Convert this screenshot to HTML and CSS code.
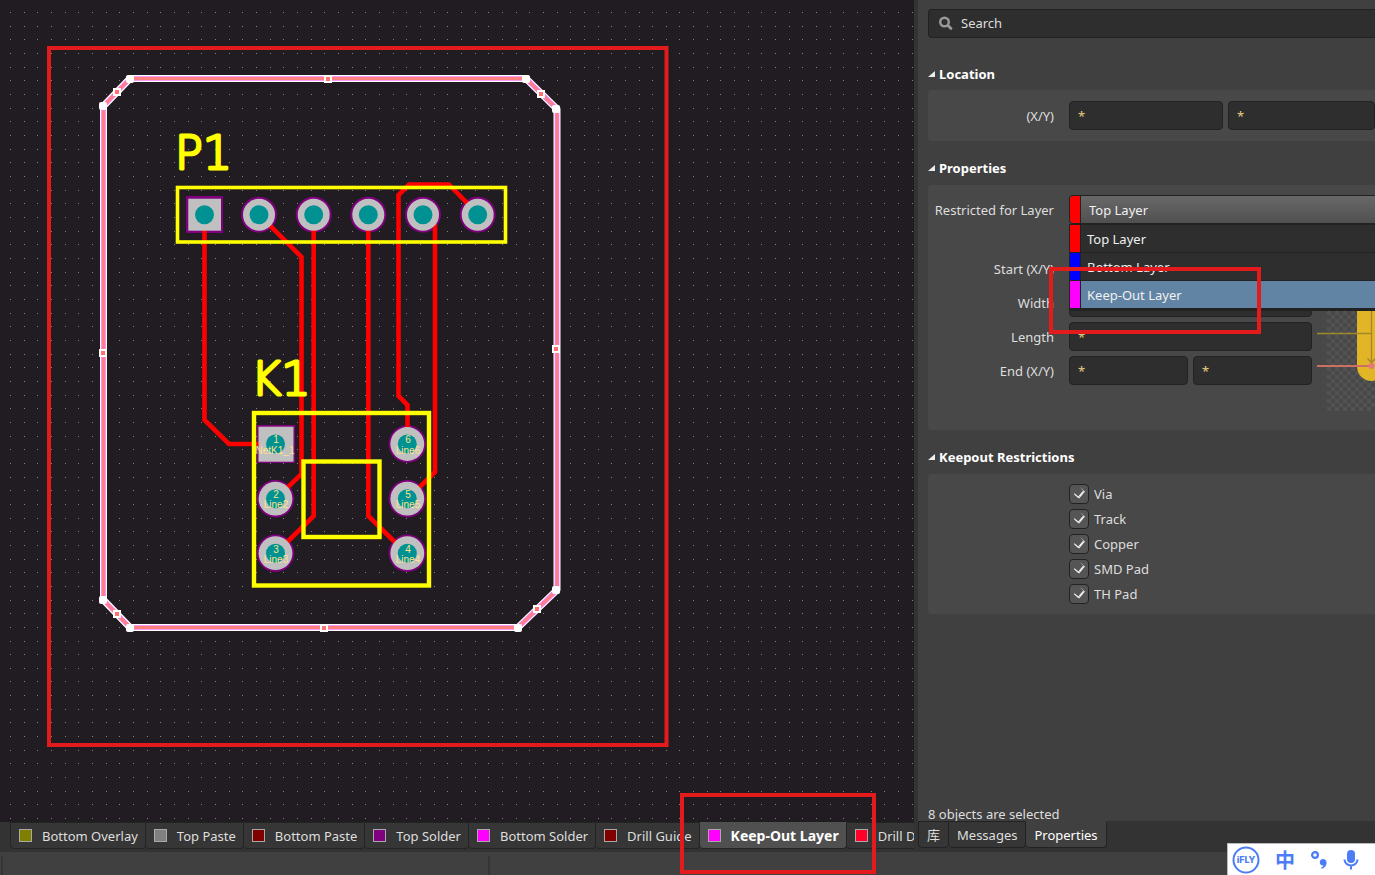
FILE: index.html
```html
<!DOCTYPE html>
<html lang="en">
<head>
<meta charset="utf-8">
<title>PCB Editor</title>
<link rel="stylesheet" href="styles.css">
</head>
<body>
<div class="app">
  <div class="main">
    <section class="workspace">
      <svg class="board" role="img" aria-label="PCB layout">
        <path id="grid" class="grid-dots"/>
        <g class="mask">
          <rect x="186" y="196" width="37" height="37"/>
          <circle cx="259" cy="214.7" r="18"/><circle cx="313.7" cy="214.7" r="18"/><circle cx="368.3" cy="214.7" r="18"/><circle cx="423" cy="214.7" r="18"/><circle cx="477.7" cy="214.7" r="18"/>
          <rect x="257" y="425" width="38" height="38"/>
          <circle cx="275.5" cy="498.7" r="18.7"/><circle cx="275.5" cy="553.2" r="18.7"/>
          <circle cx="407.3" cy="444" r="18.7"/><circle cx="407.3" cy="498.7" r="18.7"/><circle cx="407.3" cy="553.2" r="18.7"/>
        </g>
        <g class="tracks">
          <path d="M204.5 215V420L229 444H270"/>
          <path d="M259 214.700L301.500 257V474L276 498.700"/>
          <path d="M313.700 215V516L276 553"/>
          <path d="M368.300 215V516L407 554"/>
          <path d="M423 214L435 226V472L408 498.700"/>
          <path d="M477.700 214L449 184.500H409L398.500 195V396L407.500 405V440"/>
        </g>
        <g class="copper">
          <rect x="188.300" y="198.700" width="32.700" height="32"/>
          <circle cx="259" cy="214.7" r="16"/><circle cx="313.7" cy="214.7" r="16"/><circle cx="368.3" cy="214.7" r="16"/><circle cx="423" cy="214.7" r="16"/><circle cx="477.7" cy="214.7" r="16"/>
          <rect x="258.500" y="426.700" width="35" height="35"/>
          <circle cx="275.5" cy="498.7" r="16.900"/><circle cx="275.5" cy="553.2" r="16.900"/>
          <circle cx="407.3" cy="444" r="16.900"/><circle cx="407.3" cy="498.7" r="16.900"/><circle cx="407.3" cy="553.2" r="16.900"/>
        </g>
        <g class="holes">
          <circle cx="204.5" cy="214.7" r="9.500"/><circle cx="259" cy="214.7" r="9.500"/><circle cx="313.7" cy="214.7" r="9.500"/><circle cx="368.3" cy="214.7" r="9.500"/><circle cx="423" cy="214.7" r="9.500"/><circle cx="477.7" cy="214.7" r="9.500"/>
          <circle cx="275.5" cy="444" r="9.500"/><circle cx="275.5" cy="498.7" r="9.500"/><circle cx="275.5" cy="553.2" r="9.500"/>
          <circle cx="407.3" cy="444" r="9.500"/><circle cx="407.3" cy="498.7" r="9.500"/><circle cx="407.3" cy="553.2" r="9.500"/>
        </g>
        <g class="silk">
          <rect x="177.500" y="187.500" width="328" height="54.500"/>
          <rect class="silk-wide" x="254" y="413" width="175" height="172.500"/>
          <rect class="silk-wide" x="303.500" y="461.500" width="76" height="75.500"/>
        </g>
        <text class="designator" x="175" y="169">P1</text>
        <text class="designator" x="251" y="395">K1</text>
        <g class="pad-text">
          <text x="276" y="443">1</text><text x="275" y="454">NetK1_1</text>
          <text x="276" y="498">2</text><text x="276" y="508">Line2</text>
          <text x="276" y="553">3</text><text x="276" y="563">Line3</text>
          <text x="408" y="443">6</text><text x="408" y="454">Line6</text>
          <text x="408" y="498">5</text><text x="408" y="508">Line5</text>
          <text x="408" y="553">4</text><text x="408" y="563">Line4</text>
        </g>
        <g class="outline">
          <path class="outline-edge" d="M130 78.500H526L557 109V590L518 627.500H130L103.500 600V106Z"/>
          <path class="outline-glow" d="M130 78.500H526L557 109V590L518 627.500H130L103.500 600V106Z"/>
          <path class="outline-core" d="M130 78.500H526L557 109V590L518 627.500H130L103.500 600V106Z"/>
        </g>
        <g class="handles">
          <rect x="126" y="75" width="8" height="8" rx="2"/><rect x="99" y="102" width="8" height="8" rx="2"/>
          <rect x="522" y="75" width="8" height="8" rx="2"/><rect x="552" y="105" width="8" height="8" rx="2"/>
          <rect x="552" y="586" width="8" height="8" rx="2"/><rect x="514" y="624" width="8" height="8" rx="2"/>
          <rect x="126" y="624" width="8" height="8" rx="2"/><rect x="99" y="596" width="8" height="8" rx="2"/>
        </g>
        <g class="midpoints">
          <rect x="325" y="76" width="6" height="6"/><rect x="114" y="89" width="6" height="6"/>
          <rect x="538" y="91" width="6" height="6"/><rect x="553" y="346" width="6" height="6"/>
          <rect x="534" y="606" width="6" height="6"/><rect x="321" y="625" width="6" height="6"/>
          <rect x="114" y="611" width="6" height="6"/><rect x="100" y="350" width="6" height="6"/>
        </g>
        <rect class="callout" x="49" y="48" width="617.500" height="697"/>
      </svg>
      <nav class="layer-tabs" aria-label="Layers">
        <button class="layer-tab"><i class="chip olive"></i>Bottom Overlay</button>
        <button class="layer-tab"><i class="chip gray"></i>Top Paste</button>
        <button class="layer-tab"><i class="chip maroon"></i>Bottom Paste</button>
        <button class="layer-tab"><i class="chip purple"></i>Top Solder</button>
        <button class="layer-tab"><i class="chip magenta"></i>Bottom Solder</button>
        <button class="layer-tab"><i class="chip maroon"></i>Drill Guide</button>
        <button class="layer-tab active"><i class="chip magenta"></i>Keep-Out Layer</button>
        <button class="layer-tab"><i class="chip red"></i>Drill D</button>
      </nav>
    </section>

    <aside class="panel">
      <div class="panel-body">
        <label class="search">
          <svg width="16" height="16" viewBox="0 0 16 16" aria-hidden="true"><circle cx="6.500" cy="7" r="4.300" fill="none" stroke="#999" stroke-width="2.400"/><path d="M10 10.500L13 13.500" stroke="#999" stroke-width="2.800" stroke-linecap="round"/></svg>
          <input type="text" placeholder="Search" aria-label="Search">
        </label>

        <h2><i class="caret"></i>Location</h2>
        <div class="card location">
          <label for="loc-x">(X/Y)</label>
          <input class="field" id="loc-x" value="*">
          <input class="field" aria-label="Location Y" value="*">
        </div>

        <h2><i class="caret"></i>Properties</h2>
        <div class="card">
          <div class="layer-row">
            <label for="layer">Restricted for Layer</label>
            <div class="combo">
              <select id="layer"><option>Top Layer</option><option>Bottom Layer</option><option>Keep-Out Layer</option></select>
              <i class="combo-color"></i>
              <div class="combo-list">
                <button><i class="stripe red-layer"></i>Top Layer</button>
                <button><i class="stripe blue-layer"></i>Bottom Layer</button>
                <button class="selected"><i class="stripe magenta-layer"></i>Keep-Out Layer</button>
              </div>
              <div class="callout-box combo-callout"></div>
            </div>
          </div>
          <div class="geometry">
            <div class="rows">
              <div class="row"><label for="start-x">Start (X/Y)</label><input class="field" id="start-x" value="*"><input class="field" aria-label="Start Y" value="*"></div>
              <div class="row"><label for="width">Width</label><input class="field" id="width" value="*"></div>
              <div class="row"><label for="length">Length</label><input class="field" id="length" value="*"></div>
              <div class="row"><label for="end-x">End (X/Y)</label><input class="field" id="end-x" value="*"><input class="field" aria-label="End Y" value="*"></div>
            </div>
            <svg class="diagram" width="58" height="157" viewBox="0 0 58 157" aria-hidden="true">
              <defs><pattern id="checker" x="10" y="1" width="8" height="8" patternUnits="userSpaceOnUse"><path d="M0 0h4v4H0zM4 4h4v4H4z" fill="#535353"/></pattern></defs>
              <rect x="10" width="60" height="157" rx="3" fill="url(#checker)"/>
              <rect x="40" y="-30" width="29" height="157" rx="14.500" fill="#e1b525"/>
              <path d="M0 79.500H54.500" stroke="#a08a2c" stroke-width="1.500"/>
              <path d="M54.500 0V109M50.500 104.500L54.500 108.500L58.500 104.500" stroke="#a5862b" stroke-width="1.300" fill="none"/>
              <path d="M0 112H54" stroke="#cc7064" stroke-width="2"/>
              <circle cx="54.500" cy="112" r="3" fill="#e27a7a"/>
            </svg>
          </div>
        </div>

        <h2><i class="caret"></i>Keepout Restrictions</h2>
        <div class="card checks">
          <label><input type="checkbox" checked>Via</label>
          <label><input type="checkbox" checked>Track</label>
          <label><input type="checkbox" checked>Copper</label>
          <label><input type="checkbox" checked>SMD Pad</label>
          <label><input type="checkbox" checked>TH Pad</label>
        </div>
        <p class="selection">8 objects are selected</p>
      </div>
      <nav class="panel-tabs" aria-label="Panels">
        <button>库</button><button>Messages</button><button class="active">Properties</button>
      </nav>
    </aside>
    <div class="callout-box tab-callout"></div>
  </div>

  <footer class="status"><div class="status-cell"></div><div class="status-rest"></div></footer>

  <div class="ime">
    <button aria-label="iFLY">
      <svg width="28" height="28" viewBox="0 0 28 28"><circle cx="14" cy="14" r="12.500" fill="none" stroke="#4c7cf6" stroke-width="2"/><text class="ime-logo" x="14" y="17">iFLY</text></svg>
    </button>
    <button class="ime-lang">中</button>
    <button aria-label="Punctuation">
      <svg width="18" height="20" viewBox="0 0 18 20"><circle cx="5" cy="5" r="2.900" fill="none" stroke="#4c7cf6" stroke-width="2.200"/><path d="M13 9a3.300 3.300 0 0 0-1 6.400c.7.2 1 .2 1.500.1-.3 1-1.200 1.700-2.500 2.200l.6 1.100c3.200-1 5-3.200 5-6.100C16.600 10.400 15 9 13 9z" fill="#4c7cf6"/></svg>
    </button>
    <button aria-label="Voice">
      <svg width="16" height="20" viewBox="0 0 16 20"><rect x="4" y="0" width="8" height="13" rx="4" fill="#4c7cf6"/><path d="M1.500 9.500a6.500 6 0 0 0 13 0M8 15.500V19.500" fill="none" stroke="#4c7cf6" stroke-width="2"/></svg>
    </button>
  </div>
</div>
<script src="grid.js"></script>
</body>
</html>
```

FILE: styles.css
```css
* { box-sizing: border-box; }
body { margin: 0; }
body, button, input, select {
  font-family: "Noto Sans", "Noto Sans CJK SC", sans-serif;
  font-size: 13px;
}
button { border: 0; background: none; color: inherit; padding: 0; }

.app {
  position: relative;
  display: flex;
  flex-direction: column;
  height: 100vh;
  overflow: hidden;
  background: #404040;
  color: #dedede;
}
.main { position: relative; display: flex; flex: 1; min-height: 0; background: #333; }

/* Board editor */
.workspace { flex: 1; min-width: 0; display: flex; flex-direction: column; }
.board { flex: 1; min-height: 0; width: 100%; background: #211c21; }
.grid-dots { stroke: #858285; stroke-width: 1; fill: none; shape-rendering: crispEdges; }
.mask { fill: #800080; }
.tracks { fill: none; stroke: #f00; stroke-width: 4.6; }
.copper { fill: #c0c0c0; }
.holes { fill: #009292; }
.silk { fill: none; stroke: #ff0; stroke-width: 3.6; }
.silk-wide { stroke-width: 4.4; }
.designator {
  font-family: "DejaVu Sans", sans-serif;
  font-weight: 200;
  font-size: 46px;
  fill: #ff0;
  stroke: #ff0;
  stroke-width: 3;
  stroke-linejoin: round;
}
.pad-text {
  font-family: "Liberation Sans", sans-serif;
  font-size: 10px;
  fill: #ffe28c;
  text-anchor: middle;
}
.outline { fill: none; stroke-linejoin: round; }
.outline-edge { stroke: #fff; stroke-width: 7; }
.outline-glow { stroke: #f878f8; stroke-width: 4.6; }
.outline-core { stroke: #ff8080; stroke-width: 2.8; }
.handles { fill: #fff; }
.midpoints { fill: #ff7070; stroke: #fff; stroke-width: 2; }
.callout { fill: none; stroke: #e31b1d; stroke-width: 4; }
.callout-box { position: absolute; border: 4px solid #e31b1d; pointer-events: none; }

.layer-tabs { display: flex; height: 30px; padding: 0 0 3px 10px; overflow: hidden; }
.layer-tab {
  display: flex;
  flex: none;
  align-items: center;
  gap: 10px;
  padding: 0 7px 0 8px;
  border: 1px solid #242424;
  border-left-width: 0;
  border-radius: 0 0 4px 4px;
  background: #363636;
  color: #dedede;
}
.layer-tab:first-child { border-left-width: 1px; }
.layer-tab.active { background: #505050; color: #fff; font-size: 14px; font-weight: 700; border-top-color: #505050; }
.chip { width: 13px; height: 13px; border: 1px solid #aaa; }
.olive { background: #808000; }
.gray { background: #808080; }
.maroon { background: #800000; }
.purple { background: #800080; }
.magenta { background: #f0f; }
.red { background: #ff0028; }
.tab-callout { right: 499px; bottom: -22px; width: 196px; height: 81px; z-index: 2; }

/* Properties panel */
.panel { flex: none; width: 457px; margin-left: 4px; display: flex; flex-direction: column; }
.panel-body { flex: 1; min-height: 0; display: flex; flex-direction: column; padding: 9px 0 0 10px; background: #404040; }
.search {
  display: flex;
  align-items: center;
  gap: 7px;
  height: 29px;
  margin-bottom: 8px;
  padding: 0 0 2px 9px;
  border: 1px solid #222;
  border-right: 0;
  border-radius: 4px 0 0 4px;
  background: #2e2e2e;
}
.search input { flex: 1; min-width: 0; padding: 0; border: 0; outline: 0; background: none; color: #dedede; }
.search input::placeholder { color: #dedede; opacity: 1; }
h2 {
  display: flex;
  align-items: center;
  gap: 4px;
  margin: 17px 0 7px;
  font-size: 13px;
  line-height: 20px;
  color: #fff;
}
.search + h2 { margin-top: 18px; margin-bottom: 6px; }
.caret { width: 7px; height: 6px; background: #eee; clip-path: polygon(100% 0, 100% 100%, 0 100%); }
.card { padding: 10px 0; border-radius: 4px 0 0 4px; background: #484848; }
.location, .layer-row, .row { display: grid; gap: 5px; align-items: center; }
.location { grid-template-columns: 136px 154px 1fr; padding: 11px 0; }
.location > label, .layer-row > label, .row > label { padding-right: 10px; text-align: right; white-space: nowrap; }
.field {
  width: 100%;
  min-width: 0;
  height: 29px;
  padding: 0 8px;
  border: 1px solid #222;
  border-radius: 4px;
  background: #2e2e2e;
  color: #e8cf80;
}
.layer-row { grid-template-columns: 136px 1fr; }
.combo { position: relative; }
.combo select {
  display: block;
  width: 100%;
  height: 29px;
  padding: 0 0 0 19px;
  appearance: none;
  border: 1px solid #222;
  border-right: 0;
  border-radius: 4px 0 0 4px;
  background: linear-gradient(#686868, #505050);
  color: #f0f0f0;
}
.combo-color {
  position: absolute;
  left: 1px;
  top: 1px;
  width: 11px;
  height: 27px;
  border-right: 1px solid #222;
  border-radius: 4px 0 0 4px;
  background: #f00;
}
.combo-list {
  position: absolute;
  z-index: 1;
  top: 29px;
  left: 0;
  right: 0;
  border: 1px solid #222;
  border-bottom-width: 2px;
  border-right: 0;
  background: #2a2a2a;
}
.combo-list button {
  display: flex;
  align-items: center;
  gap: 6px;
  width: 100%;
  height: 28px;
  border-bottom: 1px solid #222;
  background: #2e2e2e;
  color: #f0f0f0;
}
.combo-list .selected { background: #6284a4; }
.stripe { align-self: stretch; width: 11px; border-right: 1px solid #222; }
.red-layer { background: #f00; }
.blue-layer { background: #00f; }
.magenta-layer { background: #f0f; }
.combo-callout { z-index: 2; left: -20px; top: 72px; width: 212px; height: 67px; }
.geometry { display: grid; grid-template-columns: 384px 1fr; gap: 5px; margin-top: 30px; padding-bottom: 9px; }
.rows { display: grid; gap: 5px; align-content: start; }
.row { grid-template-columns: 136px 1fr; }
.row:first-child, .row:last-child { grid-template-columns: 136px 1fr 1fr; }
.diagram { display: block; }
.checks { display: grid; gap: 5px; padding-left: 141px; }
.checks label { display: flex; align-items: center; gap: 5px; height: 20px; }
.checks input {
  display: grid;
  place-items: center;
  width: 20px;
  height: 20px;
  margin: 0;
  appearance: none;
  border: 1px solid #222;
  border-radius: 4px;
  background: #555;
}
.checks input:checked::after {
  content: "";
  width: 5px;
  height: 8px;
  margin: 0 1px 3px 0;
  border: solid #f4f4f4;
  border-width: 0 1px 1px 0;
  box-shadow: 1px 0 0 -0px #f4f4f4;
  transform: rotate(40deg);
}
.selection { margin: auto 0 0; line-height: 14px; }
.panel-tabs { display: flex; height: 31px; padding-bottom: 4px; }
.panel-tabs button {
  padding: 0 8px;
  border: 1px solid #222;
  border-left-width: 0;
  border-radius: 0 0 4px 4px;
  background: #363636;
}
.panel-tabs button:first-child { border-left-width: 1px; }
.panel-tabs .active { border-top-color: #404040; background: #404040; color: #fff; }

/* Status bar */
.status { display: flex; height: 23px; padding-top: 4px; }
.status-cell { width: 489px; border: solid #353535; border-width: 0 2px; margin-left: 1px; }
.status-rest { flex: 1; }
.ime {
  position: absolute;
  z-index: 3;
  right: 0;
  bottom: 0;
  display: flex;
  align-items: center;
  gap: 15px;
  width: 148px;
  height: 32px;
  padding-left: 4px;
  border: solid #bbb;
  border-width: 1px 0 0 1px;
  background: #fff;
  color: #4c7cf6;
}
.ime svg { display: block; }
.ime-logo { font: 800 9px "Inter", sans-serif; text-anchor: middle; fill: #4c7cf6; }
.ime-lang { font-family: "Noto Sans CJK SC", sans-serif; font-size: 20px; font-weight: 700; line-height: 28px; }
```

FILE: grid.js
```js
const grid = document.getElementById("grid");
const { width, height } = grid.ownerSVGElement.getBoundingClientRect();
const pitch = 13.66;
let d = "";
for (let y = 12.65; y < height; y += pitch) {
  for (let x = 10.65; x < width; x += pitch) {
    d += `M${Math.floor(x)} ${Math.floor(y) + 0.5}h1`;
  }
}
grid.setAttribute("d", d);
```
